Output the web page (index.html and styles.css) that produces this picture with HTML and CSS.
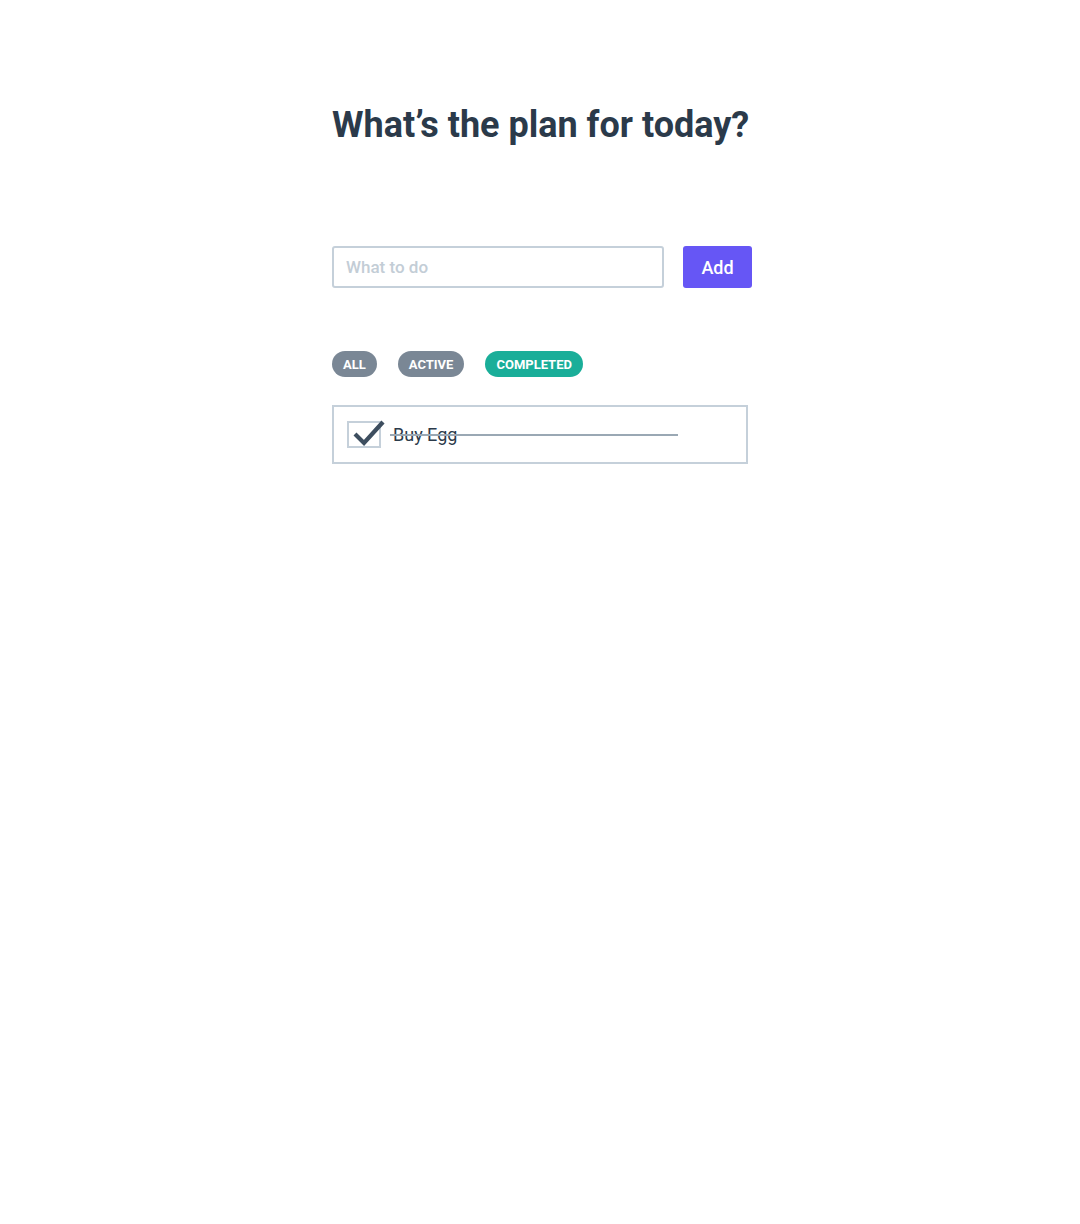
FILE: index.html
```html
<!DOCTYPE html>
<html>
<head>
<meta charset="utf-8">
<link rel="stylesheet" href="styles.css">
</head>
<body>
<main class="app">
  <h1 class="title">What’s the plan for today?</h1>
  <form class="add-form">
    <input class="todo-input" type="text" placeholder="What to do">
    <button class="add-btn" type="button">Add</button>
  </form>
  <div class="filters">
    <span class="pill">ALL</span>
    <span class="pill">ACTIVE</span>
    <span class="pill pill-active">COMPLETED</span>
  </div>
  <ul class="list">
    <li class="item">
      <span class="check">
        <svg class="tick" width="36" height="30" viewBox="0 0 36 30"><path d="M5 16 L14 25 L33 4" fill="none" stroke="#3d4e5f" stroke-width="4.2"/></svg>
      </span>
      <span class="label">Buy Egg</span>
      <span class="strike"></span>
    </li>
  </ul>
</main>
</body>
</html>
```
FILE: styles.css
```css
* { box-sizing: border-box; }
html, body { margin: 0; padding: 0; background: #fff; }
body { font-family: Roboto, "Liberation Sans", sans-serif; color: #2b3a4a; }
.app { width: 416px; margin: 0 auto; padding-top: 100px; }
.title { margin: 0; font-size: 36px; font-weight: 700; line-height: 50px; letter-spacing: 0; white-space: nowrap; color: #2b3a4a; }
.add-form { display: flex; gap: 19px; width: 420px; margin-top: 96px; }
.todo-input { width: 332px; height: 42px; border: 2px solid #c5d0da; border-radius: 3px; padding: 0 12px; font: 500 17px Roboto, "Liberation Sans", sans-serif; color: #2b3a4a; outline: none; }
.todo-input::placeholder { color: #c3cdd6; }
.add-btn { width: 69px; height: 42px; border: 0; border-radius: 3px; background: #6656f5; color: #fff; font: 500 18px Roboto, "Liberation Sans", sans-serif; padding: 0; }
.filters { display: flex; gap: 21px; margin-top: 63px; }
.pill { display: inline-flex; align-items: center; height: 26px; padding: 0 11px; border-radius: 13px; background: #7a8795; color: #fff; font-size: 13px; font-weight: 700; }
.pill-active { background: #1aae99; }
.list { list-style: none; margin: 28px 0 0; padding: 0; }
.item { position: relative; display: flex; align-items: center; height: 59px; border: 2px solid #c5d0da; padding-left: 13px; }
.check { position: relative; width: 34px; height: 27px; border: 2px solid #c5d0da; flex: none; }
.tick { position: absolute; left: 1px; top: -5px; }
.label { margin-left: 12px; font-size: 18px; color: #2b3a4a; }
.strike { position: absolute; left: 56px; top: 27px; width: 288px; height: 2px; background: #9aa8b4; }
```
